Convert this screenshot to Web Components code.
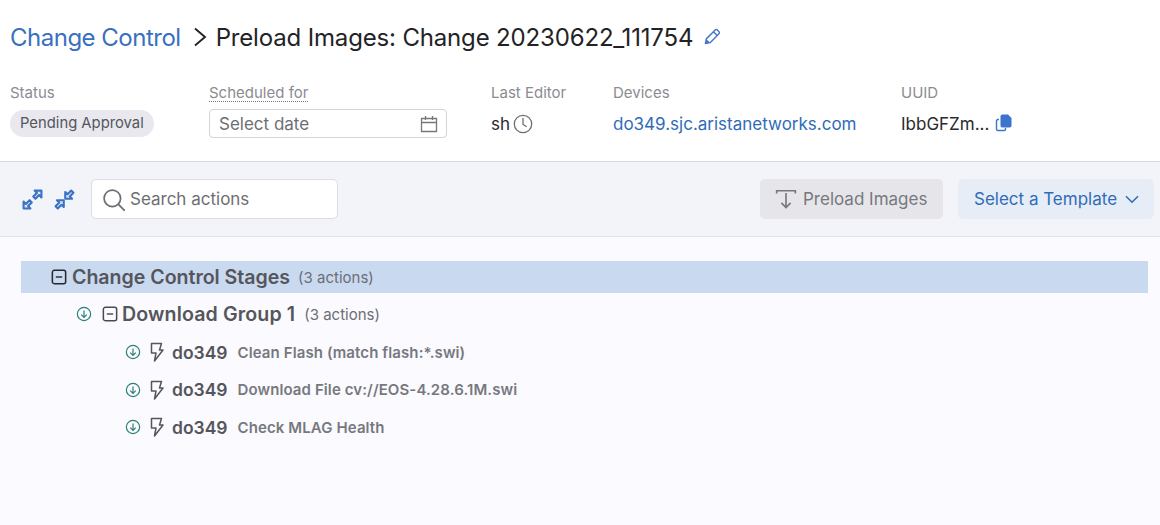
<!DOCTYPE html>
<html>
<head>
<meta charset="utf-8">
<style>
	html, body { margin: 0; height: 100%; }
	body { font-family: Inter, "Liberation Sans", sans-serif; background: #fafaff; overflow: hidden; }
</style>
</head>
<body>
<cc-page>
	<cc-header></cc-header>
	<cc-toolbar></cc-toolbar>
	<cc-tree>
		<cc-row level="0" selected toggle count="(3 actions)">Change Control Stages</cc-row>
		<cc-row level="1" status toggle count="(3 actions)">Download Group 1</cc-row>
		<cc-row level="2" status action="Clean Flash (match flash:*.swi)">do349</cc-row>
		<cc-row level="2" status action="Download File cv://EOS-4.28.6.1M.swi">do349</cc-row>
		<cc-row level="2" status action="Check MLAG Health">do349</cc-row>
	</cc-tree>
</cc-page>
<script>
	const ARROW = 'M12 1.5H18.500V8L16.300 5.800L12.800 9.300L10.700 7.200L14.200 3.700Z';
	const ICONS = {
		pencil: `<path d="M2.500 17.500l1-5L12.800 3.200a1.600 1.600 0 0 1 2.300 0l1.700 1.700a1.600 1.600 0 0 1 0 2.300L7.500 16.500z" fill="none" stroke="currentColor" stroke-width="1.500" stroke-linejoin="round"/><path d="M2.500 17.500l1-5 4 4z" fill="currentColor"/><path d="M11 5l4 4" stroke="currentColor" stroke-width="1.500"/>`,
		calendar: `<path d="M2.500 4.500h15v13h-15zM2.500 8.500h15M6.500 2v4M13.500 2v4" fill="none" stroke="currentColor" stroke-width="1.300"/>`,
		clock: `<circle cx="10" cy="10" r="8.700" fill="none" stroke="currentColor" stroke-width="1.300"/><path d="M10 4.500v6l3.300 2" fill="none" stroke="currentColor" stroke-width="1.300" stroke-linecap="round"/>`,
		copy: `<path d="M5 6.500H3.800A1.300 1.300 0 0 0 2.500 7.800v8.400a1.300 1.300 0 0 0 1.300 1.300h6.400a1.300 1.300 0 0 0 1.300-1.300V15" fill="none" stroke="currentColor" stroke-width="1.400"/><path d="M8.500 1.500h5.500l3.500 3.500v7.500a2 2 0 0 1-2 2H8.500a2 2 0 0 1-2-2v-9a2 2 0 0 1 2-2z" fill="currentColor"/>`,
		expand: `<g fill="#dbe5f4" stroke="currentColor" stroke-width="2" stroke-linejoin="round"><path d="${ARROW}"/><path d="${ARROW}" transform="rotate(180 10 10)"/></g>`,
		collapse: `<g fill="#dbe5f4" stroke="currentColor" stroke-width="2" stroke-linejoin="round"><path d="${ARROW}" transform="rotate(180 14.600 5.400)"/><path d="${ARROW}" transform="rotate(180 10 10) rotate(180 14.600 5.400)"/></g>`,
		search: `<circle cx="9" cy="9" r="7.200" fill="none" stroke="currentColor" stroke-width="1.500"/><path d="M14.300 14.300L20 20" stroke="currentColor" stroke-width="1.500" stroke-linecap="round"/>`,
		preload: `<path d="M1.500 5V2.500h17V5M10 4.500v13M5.800 13.500l4.200 4.200 4.200-4.200" fill="none" stroke="currentColor" stroke-width="1.500"/>`,
		chevron: `<path d="M2.500 6.500L10 14l7.500-7.500" fill="none" stroke="currentColor" stroke-width="2"/>`,
		crumb: `<path d="M5 1.500L15 10 5 18.500" fill="none" stroke="currentColor" stroke-width="1.900"/>`,
		download: `<circle cx="10" cy="10" r="8.300" fill="none" stroke="currentColor" stroke-width="1.500"/><path d="M10 5.500v8.500M6.500 10.700l3.500 3.500 3.500-3.500" fill="none" stroke="currentColor" stroke-width="1.500"/>`,
		minus: `<rect x="1.700" y="1.700" width="16.600" height="16.600" rx="2.500" fill="none" stroke="currentColor" stroke-width="1.900"/><path d="M6 10h8" stroke="currentColor" stroke-width="1.800"/>`,
		bolt: `<path d="M3.500 1.500h10l-2 6.500h3.500L6.500 19 8 11H3.500z" fill="none" stroke="currentColor" stroke-width="1.500" stroke-linejoin="round"/>`,
	};

	customElements.define('cc-icon', class extends HTMLElement {
		connectedCallback() {
			const size = this.getAttribute('size') || 16;
			const root = this.shadowRoot || this.attachShadow({mode: 'open'});
			root.innerHTML = `
				<style>:host { display: inline-flex; flex: none; width: ${size}px; height: ${size}px; } svg { width: 100%; height: 100%; display: block; }</style>
				<svg viewBox="0 0 20 20">${ICONS[this.getAttribute('name')]}</svg>`;
		}
	});

	customElements.define('cc-page', class extends HTMLElement {
		constructor() {
			super();
			this.attachShadow({mode: 'open'}).innerHTML = `
				<style>:host { display: flex; flex-direction: column; height: 525px; }</style>
				<slot></slot>`;
		}
	});

	customElements.define('cc-field', class extends HTMLElement {
		constructor() {
			super();
			this.attachShadow({mode: 'open'}).innerHTML = `
				<style>
					:host { display: flex; flex-direction: column; gap: 7px; flex: none; }
					.label { font-size: 15px; line-height: 18px; color: #8b8c92; width: max-content; }
					:host([dotted]) .label { border-bottom: 1px dotted #77787e; line-height: 17px; }
					.value { display: flex; align-items: center; height: 29px; }
				</style>
				<div class="label"></div>
				<div class="value"><slot></slot></div>`;
		}
		connectedCallback() {
			this.shadowRoot.querySelector('.label').textContent = this.getAttribute('label');
		}
	});

	customElements.define('cc-header', class extends HTMLElement {
		constructor() {
			super();
			this.attachShadow({mode: 'open'}).innerHTML = `
				<style>
					:host { display: block; height: 162px; box-sizing: border-box; background: #fff; border-bottom: 1px solid #d9d9de; padding: 0 10px; }
					.title { display: flex; align-items: center; height: 74px; font-size: 24px; color: #232326; }
					.name { letter-spacing: -.16px; }
					.link { color: #3a70bd; letter-spacing: -.5px; }
					.crumb { margin: 0 6px 0 9px; color: #232326; }
					.pencil { margin-left: 10px; color: #4677c4; margin-top: -2px; }
					.meta { display: flex; margin-top: 10px; }
					.pill { background: #e8e8ee; color: #55565c; font-size: 14.800px; height: 27px; line-height: 27px; padding: 0 10px; border-radius: 14px; }
					.date { box-sizing: border-box; width: 238px; height: 29px; border: 1px solid #d4d4d8; border-radius: 4px; display: flex; align-items: center; justify-content: space-between; padding: 0 7px 0 9px; background: #fff; color: #6d6e74; font-size: 17px; }
					.date cc-icon { color: #77787e; }
					.text { font-size: 17px; color: #2a2a2d; display: flex; align-items: center; gap: 3px; }
					.text cc-icon { color: #6d6e74; }
					a { color: #2f6cb8; font-size: 17px; text-decoration: none; }
					.text cc-icon.copy { color: #3a74cc; margin: -2px 0 0 2px; }
				</style>
				<div class="title">
					<span class="link">Change Control</span>
					<cc-icon class="crumb" name="crumb" size="20"></cc-icon>
					<span class="name">Preload Images: Change 20230622_111754</span>
					<cc-icon class="pencil" name="pencil" size="19"></cc-icon>
				</div>
				<div class="meta">
					<cc-field label="Status" style="width:199px"><span class="pill">Pending Approval</span></cc-field>
					<cc-field label="Scheduled for" dotted style="width:282px"><div class="date">Select date<cc-icon name="calendar" size="20"></cc-icon></div></cc-field>
					<cc-field label="Last Editor" style="width:122px"><span class="text">sh<cc-icon name="clock" size="20"></cc-icon></span></cc-field>
					<cc-field label="Devices" style="width:288px"><a>do349.sjc.aristanetworks.com</a></cc-field>
					<cc-field label="UUID"><span class="text">IbbGFZm...<cc-icon class="copy" name="copy" size="20"></cc-icon></span></cc-field>
				</div>`;
		}
	});

	customElements.define('cc-toolbar', class extends HTMLElement {
		constructor() {
			super();
			this.attachShadow({mode: 'open'}).innerHTML = `
				<style>
					:host { display: flex; align-items: center; height: 75px; box-sizing: border-box; background: #f3f4f9; border-bottom: 1px solid #e3e3e8; padding: 0 6px 0 22px; }
					.tools { display: flex; gap: 11px; color: #3a72c4; margin-right: 16px; }
					.search { box-sizing: border-box; width: 247px; height: 40px; display: flex; align-items: center; gap: 5px; padding: 0 10px; background: #fff; border: 1px solid #dcdce1; border-radius: 5px; color: #6d6e74; font-size: 17px; }
					.spacer { flex: 1; }
					.btn { box-sizing: border-box; height: 40px; display: flex; align-items: center; border-radius: 5px; font-size: 17px; }
					.preload { width: 183px; padding-left: 15px; gap: 6px; background: #e6e6ea; color: #77787e; margin-right: 15px; }
					.template { width: 196px; padding-left: 16px; gap: 7px; background: #e6edf7; color: #2f6cb8; }
				</style>
				<div class="tools"><cc-icon name="expand" size="21"></cc-icon><cc-icon name="collapse" size="21"></cc-icon></div>
				<div class="search"><cc-icon name="search" size="23"></cc-icon>Search actions</div>
				<div class="spacer"></div>
				<div class="btn preload"><cc-icon name="preload" size="22"></cc-icon>Preload Images</div>
				<div class="btn template">Select a Template<cc-icon name="chevron" size="16"></cc-icon></div>`;
		}
	});

	customElements.define('cc-tree', class extends HTMLElement {
		constructor() {
			super();
			this.attachShadow({mode: 'open'}).innerHTML = `
				<style>:host { display: block; padding: 24px 12px 0 21px; }</style>
				<slot></slot>`;
		}
	});

	customElements.define('cc-row', class extends HTMLElement {
		constructor() {
			super();
			this.attachShadow({mode: 'open'}).innerHTML = `
				<style>
					:host { display: flex; align-items: center; height: 37.500px; color: #55565c; }
					:host([level="0"]) { height: 32px; margin-bottom: 2px; background: #c9d9f0; padding-left: 30px; }
					:host([level="1"]) { padding-left: 55px; height: 38.600px; }
					:host([level="2"]) { padding-left: 104px; }
					.status { color: #2a8077; margin-right: 7px; }
					:host([level="1"]) .status { margin-right: 10px; }
					.toggle { color: #4a4b50; margin-right: 4px; }
					:host([level="0"]) .toggle { color: #26272b; margin-right: 5px; }
					.bolt { color: #55565c; margin-right: 4px; }
					.name { font-weight: 600; font-size: 19.600px; }
					:host([level="0"]) .name { letter-spacing: -.03px; }
					:host([level="1"]) .name { letter-spacing: .12px; }
					:host([level="2"]) .name { font-size: 17.500px; }
					.count { font-size: 15px; color: #6d6e74; margin-left: 8px; }
					:host([level="1"]) .count { margin-left: 9px; }
					.action { font-size: 15px; letter-spacing: .1px; font-weight: 600; color: #77787e; margin-left: 10px; }
				</style>
				<cc-icon class="status" name="download" size="16"></cc-icon>
				<cc-icon class="toggle" name="minus" size="16"></cc-icon>
				<cc-icon class="bolt" name="bolt" size="20"></cc-icon>
				<span class="name"><slot></slot></span>
				<span class="count"></span>
				<span class="action"></span>`;
		}
		connectedCallback() {
			const $ = (s) => this.shadowRoot.querySelector(s);
			if (!this.hasAttribute('status')) $('.status').remove();
			if (!this.hasAttribute('toggle')) $('.toggle').remove(); else $('.bolt').remove();
			if (this.hasAttribute('count')) $('.count').textContent = this.getAttribute('count'); else $('.count').remove();
			if (this.hasAttribute('action')) $('.action').textContent = this.getAttribute('action'); else $('.action').remove();
		}
	});
</script>
</body>
</html>
